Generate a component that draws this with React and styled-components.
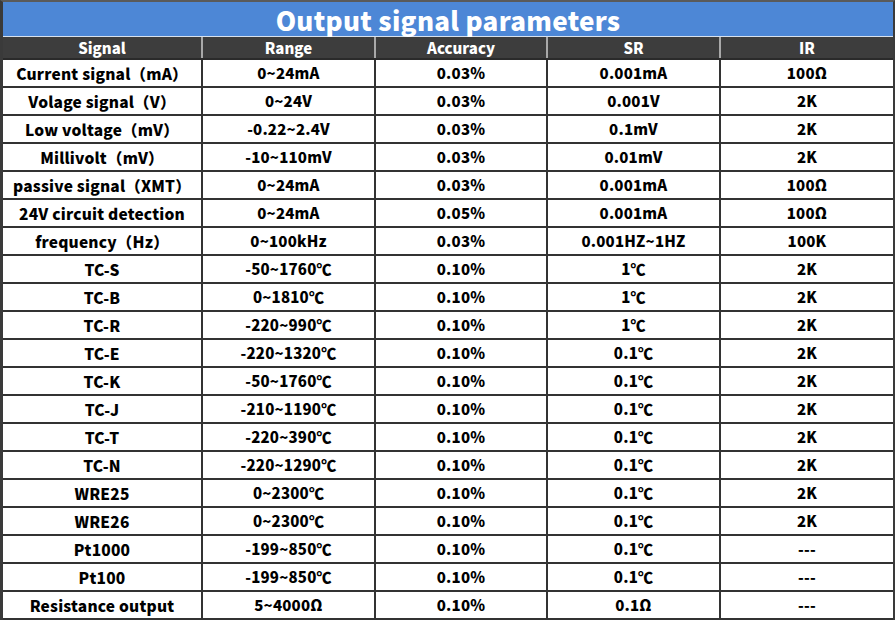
import React from 'react'
import styled, { createGlobalStyle } from 'styled-components'

const GlobalStyle = createGlobalStyle`
    html, body {
        margin: 0;
        padding: 0;
        background: #ffffff;
        overflow: hidden;
    }
    body {
        font-family: "Noto Sans CJK SC", "Noto Sans", sans-serif;
    }
`

const Frame = styled.div`
    width: 895px;
    height: 620px;
    box-sizing: border-box;
    border-top: 2px solid #5a5a5a;
    border-left: 3px solid #3a3a3a;
    border-right: 2px solid #3a3a3a;
    overflow: hidden;
    background: #fff;
`

const Title = styled.div`
    height: 34px;
    background: #4d87d6;
    color: #fff;
    font-size: 26px;
    font-weight: 900;
    display: flex;
    align-items: center;
    justify-content: center;
    border-bottom: 1px solid #d8e2ee;
    letter-spacing: 0.3px;
`

const Table = styled.table`
    width: 890px;
    border-collapse: collapse;
    table-layout: fixed;
`

const HeadCell = styled.th`
    height: 21px;
    padding: 0;
    background: #3d3d3d;
    color: #fff;
    font-size: 15px;
    font-weight: 900;
    line-height: 21px;
    text-align: center;
    border-right: 2px solid #a9a9a9;
    border-bottom: 2px solid #2a2a2a;

    &:last-child {
        border-right: none;
    }
`

const Cell = styled.td`
    height: 26px;
    padding: 0;
    color: #000;
    font-size: ${p => (p.$first ? '15.5px' : '15px')};
    font-weight: 900;
    line-height: 26px;
    text-align: center;
    white-space: nowrap;
    letter-spacing: 0.2px;
    border-right: 2px solid #333;
    border-bottom: 2px solid #333;

    &:last-child {
        border-right: none;
    }
`

const widths = [199, 173, 172, 173, 173]
const headers = ['Signal', 'Range', 'Accuracy', 'SR', 'IR']

const rows = [
    ['Current signal（mA）', '0~24mA', '0.03%', '0.001mA', '100Ω'],
    ['Volage signal（V）', '0~24V', '0.03%', '0.001V', '2K'],
    ['Low voltage（mV）', '-0.22~2.4V', '0.03%', '0.1mV', '2K'],
    ['Millivolt（mV）', '-10~110mV', '0.03%', '0.01mV', '2K'],
    ['passive signal（XMT）', '0~24mA', '0.03%', '0.001mA', '100Ω'],
    ['24V circuit detection', '0~24mA', '0.05%', '0.001mA', '100Ω'],
    ['frequency（Hz）', '0~100kHz', '0.03%', '0.001HZ~1HZ', '100K'],
    ['TC-S', '-50~1760℃', '0.10%', '1℃', '2K'],
    ['TC-B', '0~1810℃', '0.10%', '1℃', '2K'],
    ['TC-R', '-220~990℃', '0.10%', '1℃', '2K'],
    ['TC-E', '-220~1320℃', '0.10%', '0.1℃', '2K'],
    ['TC-K', '-50~1760℃', '0.10%', '0.1℃', '2K'],
    ['TC-J', '-210~1190℃', '0.10%', '0.1℃', '2K'],
    ['TC-T', '-220~390℃', '0.10%', '0.1℃', '2K'],
    ['TC-N', '-220~1290℃', '0.10%', '0.1℃', '2K'],
    ['WRE25', '0~2300℃', '0.10%', '0.1℃', '2K'],
    ['WRE26', '0~2300℃', '0.10%', '0.1℃', '2K'],
    ['Pt1000', '-199~850℃', '0.10%', '0.1℃', '---'],
    ['Pt100', '-199~850℃', '0.10%', '0.1℃', '---'],
    ['Resistance output', '5~4000Ω', '0.10%', '0.1Ω', '---']
]

const App = () => (
    <React.Fragment>
        <GlobalStyle />
        <Frame>
            <Title>Output signal parameters</Title>
            <Table>
                <colgroup>
                    {widths.map((w, i) => (
                        <col key={i} style={{ width: w }} />
                    ))}
                </colgroup>
                <thead>
                    <tr>
                        {headers.map(h => (
                            <HeadCell key={h}>{h}</HeadCell>
                        ))}
                    </tr>
                </thead>
                <tbody>
                    {rows.map(row => (
                        <tr key={row[0]}>
                            {row.map((c, i) => (
                                <Cell key={i} $first={i === 0}>
                                    {c}
                                </Cell>
                            ))}
                        </tr>
                    ))}
                </tbody>
            </Table>
        </Frame>
    </React.Fragment>
)

export default App
